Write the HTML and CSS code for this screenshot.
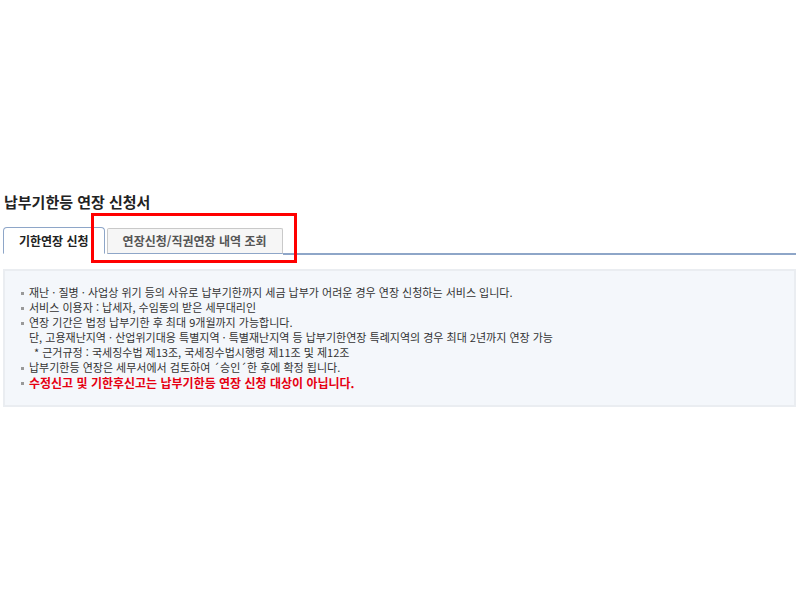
FILE: index.html
```html
<!DOCTYPE html>
<html lang="ko">
<head>
<meta charset="utf-8">
<link rel="stylesheet" href="styles.css">
</head>
<body>
<div class="page">
  <h2 class="title">납부기한등 연장 신청서</h2>
  <div class="tabs">
    <div class="tab active">기한연장 신청</div>
    <div class="tab">연장신청/직권연장 내역 조회</div>
    <div class="tab-rest"></div>
    <div class="highlight"></div>
  </div>
  <div class="info">
    <ul class="list">
      <li>재난 · 질병 · 사업상 위기 등의 사유로 납부기한까지 세금 납부가 어려운 경우 연장 신청하는 서비스 입니다.</li>
      <li>서비스 이용자 : 납세자, 수임동의 받은 세무대리인</li>
      <li>연장 기간은 법정 납부기한 후 최대 9개월까지 가능합니다.<br>단, 고용재난지역 · 산업위기대응 특별지역 · 특별재난지역 등 납부기한연장 특례지역의 경우 최대 2년까지 연장 가능<br><span class="note">* 근거규정 : 국세징수법 제13조, 국세징수법시행령 제11조 및 제12조</span></li>
      <li>납부기한등 연장은 세무서에서 검토하여 ´승인´한 후에 확정 됩니다.</li>
      <li class="warn">수정신고 및 기한후신고는 납부기한등 연장 신청 대상이 아닙니다.</li>
    </ul>
  </div>
</div>
</body>
</html>
```
FILE: styles.css
```css
html, body {
  margin: 0;
  padding: 0;
  background: #fff;
}
body {
  font-family: "Noto Sans CJK KR", "Noto Sans", sans-serif;
  color: #333;
}
.page {
  padding: 192px 4px 0 3px;
}
.title {
  margin: 0 0 0 1px;
  font-size: 15px;
  font-weight: bold;
  line-height: 20px;
  color: #222;
}
.tabs {
  position: relative;
  display: flex;
  align-items: flex-end;
  margin-top: 15px;
  height: 27px;
}
.tab {
  box-sizing: border-box;
  height: 26px;
  border: 1px solid #c9c9c9;
  border-bottom: 1px solid #8ea6c8;
  background: #f6f6f6;
  color: #555;
  font-size: 12px;
  font-weight: bold;
  line-height: 24px;
  padding: 0 15px;
  border-radius: 2px 2px 0 0;
  margin-left: 2px;
}
.tab.active {
  height: 27px;
  margin-left: 0;
  background: #fff;
  color: #222;
  border: 1px solid #8ea6c8;
  border-bottom: 1px solid #fff;
  border-radius: 4px 4px 0 0;
  padding: 0 15px;
  line-height: 26px;
}
.tab-rest {
  flex: 1;
  height: 0;
  border-bottom: 2px solid #8ea6c8;
  margin-bottom: -1px;
}
.highlight {
  position: absolute;
  left: 88px;
  top: -14px;
  width: 200px;
  height: 44px;
  border: 3px solid #ff0000;
}
.info {
  margin-top: 15px;
  background: #f4f7fb;
  border: 2px solid #eaedf1;
  padding: 14px 10px 15px 14px;
}
.list {
  margin: 0;
  padding: 0;
  list-style: none;
  font-size: 11px;
  line-height: 15px;
  color: #333;
}
.list li {
  position: relative;
  padding-left: 10px;
}
.list li::before {
  content: "";
  position: absolute;
  left: 2px;
  top: 7px;
  width: 3px;
  height: 3px;
  background: #999;
}
.note {
  padding-left: 5px;
}
.warn {
  color: #e60012;
  font-weight: bold;
  font-size: 12px;
}
.warn::before {
  background: #e98a8a;
}
```
